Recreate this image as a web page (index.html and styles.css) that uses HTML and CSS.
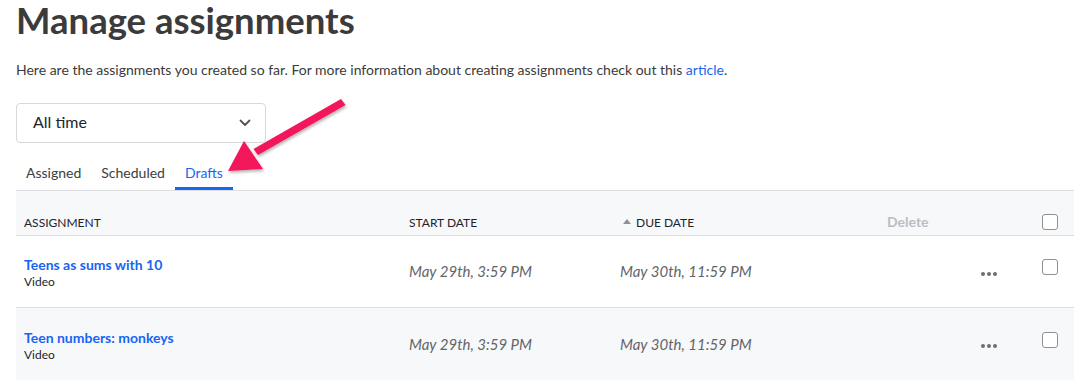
FILE: index.html
```html
<!DOCTYPE html>
<html>
<head>
<meta charset="utf-8">
<link rel="stylesheet" href="styles.css">
</head>
<body>
<div class="page">
  <h1 class="title">Manage assignments</h1>
  <p class="intro">Here are the assignments you created so far. For more information about creating assignments check out this <a class="link" href="#">article</a>.</p>
  <div class="select">
    <span class="seltext">All time</span>
    <svg class="chev" width="12" height="8" viewBox="0 0 12 8"><path d="M1.5 1.5 L6 6 L10.5 1.5" fill="none" stroke="#555" stroke-width="1.8" stroke-linecap="round" stroke-linejoin="round"/></svg>
  </div>
  <div class="tabs">
    <div class="tab">Assigned</div>
    <div class="tab">Scheduled</div>
    <div class="tab active">Drafts</div>
  </div>
  <div class="table">
    <div class="row head">
      <div class="cell">ASSIGNMENT</div>
      <div class="cell">START DATE</div>
      <div class="cell"><span class="sort"></span>DUE DATE</div>
      <div class="cell del">Delete</div>
      <div class="cell chk"><span class="box"></span></div>
    </div>
    <div class="row">
      <div class="cell name"><a class="alink" href="#">Teens as sums with 10</a><span class="kind">Video</span></div>
      <div class="cell date">May 29th, 3:59 PM</div>
      <div class="cell date due">May 30th, 11:59 PM</div>
      <div class="cell more"><span class="dots"><i></i><i></i><i></i></span></div>
      <div class="cell chk"><span class="box"></span></div>
    </div>
    <div class="row alt">
      <div class="cell name"><a class="alink" href="#">Teen numbers: monkeys</a><span class="kind">Video</span></div>
      <div class="cell date">May 29th, 3:59 PM</div>
      <div class="cell date due">May 30th, 11:59 PM</div>
      <div class="cell more"><span class="dots"><i></i><i></i><i></i></span></div>
      <div class="cell chk"><span class="box"></span></div>
    </div>
  </div>
  <svg class="arrow" width="140" height="90" viewBox="220 95 140 90">
    <defs>
      <filter id="sh" x="-20%" y="-20%" width="140%" height="140%">
        <feDropShadow dx="1" dy="2" stdDeviation="1.5" flood-color="#000" flood-opacity="0.3"/>
      </filter>
    </defs>
    <g filter="url(#sh)" fill="#f2135a">
      <path d="M341 99 L345.5 105 L258 155 L253.5 149 Z"/>
      <path d="M228 171 L244 141 L263 169 Z"/>
    </g>
  </svg>
</div>
</body>
</html>
```
FILE: styles.css
```css
* { box-sizing: border-box; }
html, body { margin: 0; padding: 0; background: #fff; }
body { font-family: Lato, "Noto Sans", sans-serif; color: #21242c; }
.page { position: relative; padding: 0 10px 0 16px; width: 1084px; height: 380px; overflow: hidden; }
.title { margin: 0; padding-top: 0; font-size: 36.5px; line-height: 40px; font-weight: 700; color: #3b3b3b; letter-spacing: 0; }
.intro { margin: 20px 0 0; font-size: 14px; line-height: 20px; color: #3b3b3b; }
.link { color: #1865f2; text-decoration: none; }
.select { margin-top: 23px; width: 250px; height: 40px; border: 1px solid #d6d8da; border-radius: 4px; display: flex; align-items: center; justify-content: space-between; padding: 0 14px 3px 16px; font-size: 16px; color: #21242c; }
.chev { margin-top: 2px; }
.tabs { display: flex; margin-top: 9px; height: 38px; }
.tab { padding: 11px 10px 0; font-size: 14px; line-height: 20px; color: #3b3e40; border-bottom: 3px solid transparent; height: 38px; }
.tab.active { color: #1865f2; border-bottom-color: #1865f2; }
.table { width: 1058px; border-top: 1px solid #dcdee0; margin-top: 0; }
.row { display: grid; grid-template-columns: 385px 214px 257px 154px 48px; height: 72px; border-bottom: 1px solid #dcdee0; align-items: center; background: #fff; }
.row.head { height: 45px; background: #f7f8fa; padding-top: 19px; }
.row.alt { background: #f7f8fa; border-bottom: none; }
.cell { padding-left: 8px; }
.head .cell { font-size: 12px; color: #21242c; display: flex; align-items: center; }
.sort { display: inline-block; width: 0; height: 0; border-left: 4px solid transparent; border-right: 4px solid transparent; border-bottom: 5px solid #8d9094; margin-right: 5px; margin-top: -2px; }
.head .del { padding-left: 15px; font-size: 14px; font-weight: 700; color: #babec2; margin-top: -3px; }
.chk { padding-left: 16px; display: flex; }
.box { width: 16px; height: 16px; border: 1px solid #8d9094; border-radius: 3px; background: #fff; display: block; }
.name { display: flex; flex-direction: column; margin-top: 3px; }
.alink { color: #1865f2; font-weight: 700; font-size: 14px; line-height: 18px; text-decoration: none; }
.kind { font-size: 12px; line-height: 16px; color: #21242c; }
.date { font-style: italic; font-size: 15px; color: #626569; margin-top: -1px; }
.date.due { padding-left: 5px; }
.more { display: flex; justify-content: flex-end; padding-right: 29px; }
.dots { display: flex; gap: 2px; margin-top: 4px; }
.dots i { width: 4px; height: 4px; border-radius: 50%; background: #6b6e72; display: block; }
.row .chk .box { margin-top: -9px; }
.head .chk .box { margin-top: -2px; }
.arrow { position: absolute; left: 220px; top: 95px; }
```
